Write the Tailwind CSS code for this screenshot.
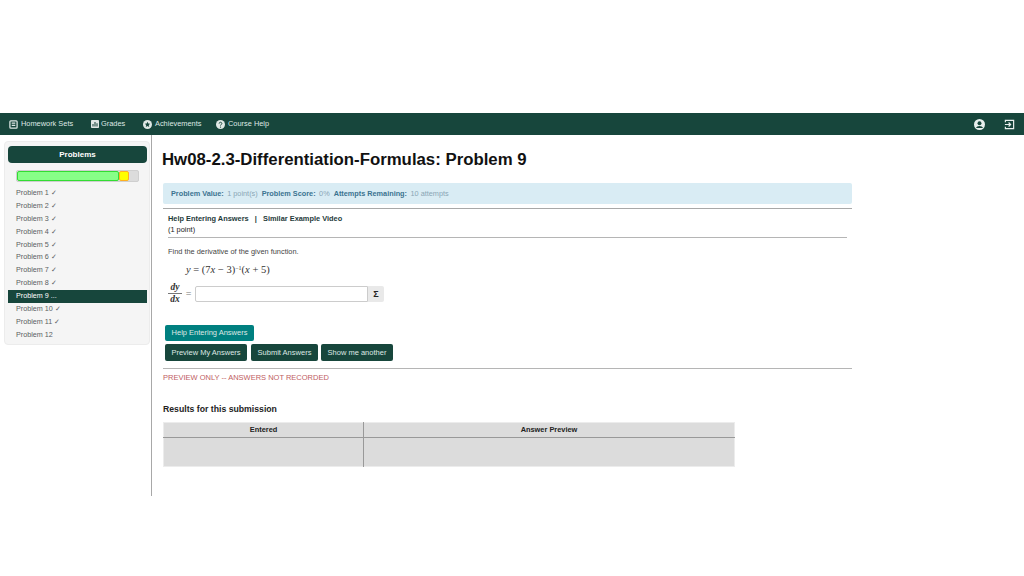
<!DOCTYPE html>
<html lang="en">
<head>
    <meta charset="UTF-8">
    <title>Hw08-2.3-Differentiation-Formulas: Problem 9</title>
    <script src="https://cdn.jsdelivr.net/npm/@tailwindcss/browser@4"></script>
</head>
<body class="bg-white h-[576px] overflow-hidden font-['Liberation_Sans',sans-serif] text-[8px] leading-[12px] text-[#212529]">

    <div class="h-[113px]"></div>

    <!-- Top nav -->
    <nav class="h-[22px] bg-[#17463c] text-[#dfe8e5] text-[7.4px] flex items-center pl-[9px] pr-[9px]">
        <div class="flex items-center gap-[3px] w-[82px]">
            <svg class="w-[9px] h-[9px]" viewBox="0 0 10 10" fill="none" stroke="currentColor" stroke-width="1.4"><rect x="1" y="1" width="8" height="8" rx="1"/><path d="M3 3.5h4M3 6h4"/></svg>
            <span>Homework Sets</span>
        </div>
        <div class="flex items-center gap-[2px] w-[52px]">
            <svg class="w-[8px] h-[8px]" viewBox="0 0 10 10"><rect width="10" height="10" rx="1" fill="#dfe8e5"/><path d="M2.5 8V5M5 8V2.5M7.5 8V4" stroke="#17463c" stroke-width="1.3"/></svg>
            <span>Grades</span>
        </div>
        <div class="flex items-center gap-[3px] w-[73px]">
            <svg class="w-[9px] h-[9px]" viewBox="0 0 10 10"><circle cx="5" cy="5" r="5" fill="#dfe8e5"/><path d="M5 2l.9 2 2.1.2-1.6 1.4.5 2.1L5 6.6 3.1 7.7l.5-2.1L2 4.2 4.1 4z" fill="#17463c"/></svg>
            <span>Achievements</span>
        </div>
        <div class="flex items-center gap-[3px]">
            <svg class="w-[9px] h-[9px]" viewBox="0 0 10 10"><circle cx="5" cy="5" r="5" fill="#dfe8e5"/><path d="M3.5 4c0-2 3-2 3 0 0 1.2-1.5 1-1.5 2.2" fill="none" stroke="#17463c" stroke-width="1.1"/><circle cx="5" cy="7.9" r=".7" fill="#17463c"/></svg>
            <span>Course Help</span>
        </div>
        <div class="ml-auto flex items-center gap-[19px]">
            <svg class="w-[11px] h-[11px]" viewBox="0 0 10 10"><circle cx="5" cy="5" r="5" fill="#e8efed"/><circle cx="5" cy="3.8" r="1.8" fill="#17463c"/><path d="M1.8 8.2c.8-2.6 5.6-2.6 6.4 0" fill="#17463c"/></svg>
            <svg class="w-[11px] h-[11px]" viewBox="0 0 12 12" fill="none" stroke="#e8efed" stroke-width="1.3"><path d="M1.5 3.5v-2h9v9h-9v-2M1 6h6M5 3.8L7.2 6 5 8.2"/></svg>
        </div>
    </nav>

    <div class="flex h-[361px]">
        <!-- Sidebar -->
        <aside class="w-[152px] shrink-0 border-r border-[#a8a8a8] pt-[6px] pl-[4px] pr-[1px]">
            <div class="h-[204px] bg-[#f5f5f5] border border-[#ececec] rounded-[4px] pt-[4px] pl-[3px] pr-[2px]">
                <div class="h-[17px] bg-[#17463c] rounded-[4px] text-white font-bold flex items-center justify-center">Problems</div>
                <div class="mt-[7px] mx-[8px] h-[12px] bg-[#dcdcdc] border border-[#cfcfcf] rounded-[2px] flex overflow-hidden">
                    <div class="w-[102px] bg-[#88ff88] border border-[#33dd33] rounded-[2px]"></div>
                    <div class="w-[10px] bg-[#ffff00] border border-[#ffb020] rounded-[2px]"></div>
                </div>
                <ul class="mt-[4.5px] text-[7.2px] text-[#5a5f63]">
                    <li class="h-[12.9px] pl-[8px] flex items-center">Problem 1 ✓</li>
                    <li class="h-[12.9px] pl-[8px] flex items-center">Problem 2 ✓</li>
                    <li class="h-[12.9px] pl-[8px] flex items-center">Problem 3 ✓</li>
                    <li class="h-[12.9px] pl-[8px] flex items-center">Problem 4 ✓</li>
                    <li class="h-[12.9px] pl-[8px] flex items-center">Problem 5 ✓</li>
                    <li class="h-[12.9px] pl-[8px] flex items-center">Problem 6 ✓</li>
                    <li class="h-[12.9px] pl-[8px] flex items-center">Problem 7 ✓</li>
                    <li class="h-[12.9px] pl-[8px] flex items-center">Problem 8 ✓</li>
                    <li class="h-[12.9px] pl-[8px] flex items-center bg-[#17463c] text-white">Problem 9 ...</li>
                    <li class="h-[12.9px] pl-[8px] flex items-center">Problem 10 ✓</li>
                    <li class="h-[12.9px] pl-[8px] flex items-center">Problem 11 ✓</li>
                    <li class="h-[12.9px] pl-[8px] flex items-center">Problem 12</li>
                </ul>
            </div>
        </aside>

        <!-- Main -->
        <main class="w-[689px] ml-[11px]">
            <h1 class="mt-[14px] -ml-[1px] text-[16.8px] leading-[22px] font-bold text-[#111]">Hw08-2.3-Differentiation-Formulas: Problem 9</h1>

            <div class="mt-[12px] h-[21px] bg-[#d9ecf4] rounded-[2px] pl-[8px] flex items-center gap-[3.5px] text-[7.3px] text-[#8aa6b4]">
                <b class="text-[#3b7390]">Problem Value:</b><span>1 point(s)</span>
                <b class="ml-[0.5px] text-[#3b7390]">Problem Score:</b><span>0%</span>
                <b class="ml-[0.5px] text-[#3b7390]">Attempts Remaining:</b><span>10 attempts</span>
            </div>

            <div class="mt-[4px] border-t border-[#a8a8a8] px-[5px]">
                <div class="h-[29px] pt-[3.5px] border-b border-[#b5b5b5] text-[#222] text-[7.4px] leading-[11px]">
                    <div class="font-bold text-[#1e3a3a]">Help Entering Answers &nbsp;&nbsp;|&nbsp;&nbsp; Similar Example Video</div>
                    <div>(1 point)</div>
                </div>
                <p class="mt-[8px] text-[7.4px] text-[#444]">Find the derivative of the given function.</p>
                <p class="mt-[5px] ml-[18px] h-[14px] text-[10.5px] leading-[14px] font-['Liberation_Serif',serif] text-[#333]"><i>y</i> = (7<i>x</i> − 3)<sup class="text-[6px]">−1</sup>(<i>x</i> + 5)</p>
                <div class="mt-[5px] flex items-center">
                    <div class="w-[14px] flex flex-col items-center font-['Liberation_Serif',serif] italic font-bold text-[9.5px] leading-[11px] text-[#333]">
                        <span class="border-b border-[#777] w-full text-center">dy</span>
                        <span>dx</span>
                    </div>
                    <span class="w-[13px] text-center font-['Liberation_Serif',serif] text-[10px] text-[#777]">=</span>
                    <div class="w-[173px] h-[16px] bg-white border border-[#ccc] rounded-l-[2px]"></div>
                    <div class="w-[16px] h-[16px] bg-[#e9e9e9] rounded-r-[2px] flex items-center justify-center font-bold text-[9px] text-[#222]">Σ</div>
                </div>
            </div>

            <div class="mt-[20px] ml-[2px] flex flex-col gap-[3px] text-[7.5px] text-[#dfe8e5]">
                <div class="w-[89px] h-[16px] bg-[#008080] rounded-[2px] flex items-center justify-center">Help Entering Answers</div>
                <div class="flex gap-[4px]">
                    <div class="w-[82px] h-[17px] bg-[#17463c] rounded-[2px] flex items-center justify-center">Preview My Answers</div>
                    <div class="w-[67px] h-[17px] bg-[#17463c] rounded-[2px] flex items-center justify-center">Submit Answers</div>
                    <div class="w-[72px] h-[17px] -ml-[1px] bg-[#17463c] rounded-[2px] flex items-center justify-center">Show me another</div>
                </div>
            </div>

            <div class="mt-[7px] border-t border-[#b5b5b5] pt-[3px] text-[#c0605f] text-[7.5px]">PREVIEW ONLY -- ANSWERS NOT RECORDED</div>

            <h2 class="mt-[19px] text-[8.7px] font-bold text-[#222]">Results for this submission</h2>

            <table class="mt-[7px] w-[572px] h-[45px] bg-[#dcdcdc] border border-[#ececec] border-collapse table-fixed text-[7.4px] font-bold text-[#222]">
                <tbody>
                    <tr class="h-[15px] border-b border-[#999]">
                        <th class="w-[200px] border-r border-[#999]">Entered</th>
                        <th>Answer Preview</th>
                    </tr>
                    <tr>
                        <td class="border-r border-[#999]"></td>
                        <td></td>
                    </tr>
                </tbody>
            </table>
        </main>
    </div>

</body>
</html>
